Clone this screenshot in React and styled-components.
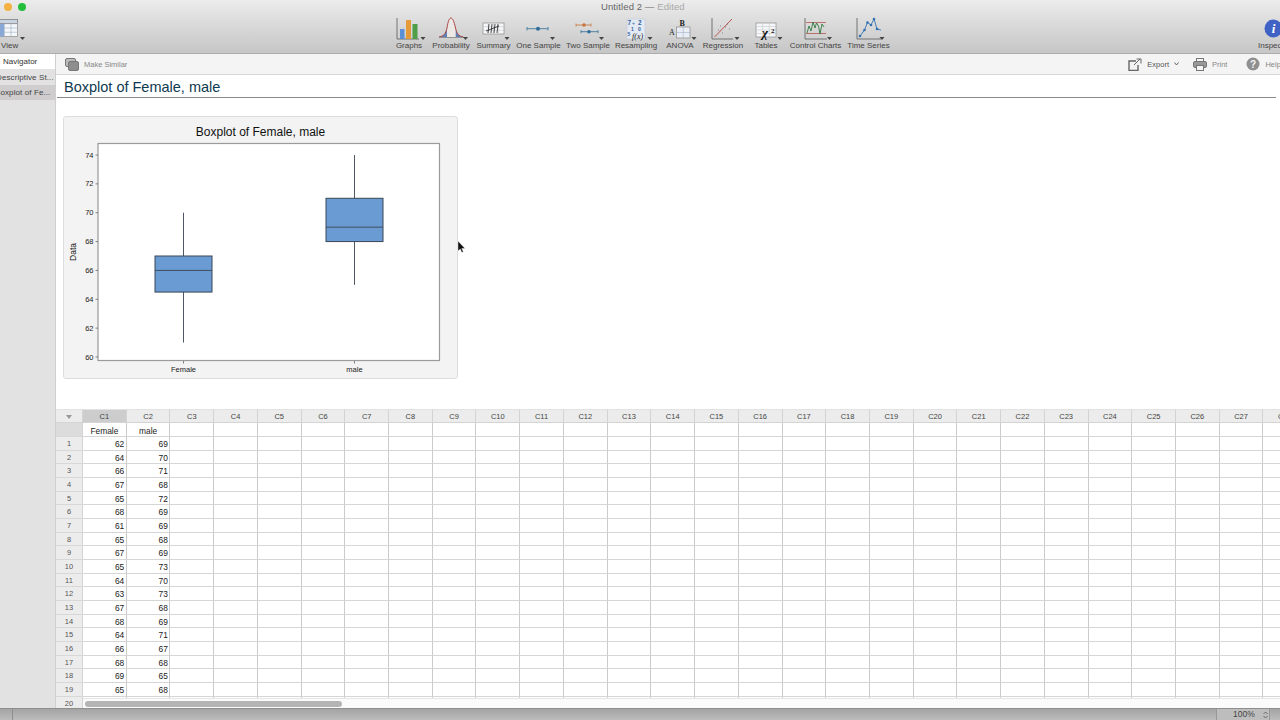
import React from "react";
import styled, { createGlobalStyle } from "styled-components";

const GlobalStyle = createGlobalStyle`
	html, body {
		margin: 0;
		padding: 0;
		width: 100%;
		height: 100%;
		overflow: hidden;
		background: #fff;
		font-family: "Liberation Sans", Arial, sans-serif;
	}
`;

const Page = styled.div`
	position: relative;
	width: 1280px;
	height: 720px;
	display: flex;
	flex-direction: column;
	overflow: hidden;
`;

const TopBar = styled.header`
	height: 54px;
	flex: none;
	box-sizing: border-box;
	border-bottom: 1px solid #aeaeae;
	background: linear-gradient(#ececec, #e0e0e0 30%, #c6c6c6);
	display: flex;
	flex-direction: column;
`;

const TitleRow = styled.div`
	height: 14px;
	flex: none;
	display: flex;
	align-items: center;
	padding-left: 4px;
	position: relative;
`;

const Light = styled.span`
	width: 8px;
	height: 8px;
	border-radius: 50%;
	margin-right: 6px;
	background: ${(props) => props.$color};
`;

const WindowTitle = styled.div`
	position: absolute;
	left: 601px;
	top: 1px;
	font-size: 9.5px;
	line-height: 12px;
	letter-spacing: 0.1px;
	color: #666;

	span {
		color: #aaa;
	}
`;

const ToolRow = styled.div`
	height: 36px;
	flex: none;
	margin-top: 2px;
	display: flex;
`;

const ViewSlot = styled.div`
	width: 388px;
	flex: none;
`;

const Tool = styled.div`
	width: ${(props) => props.$w}px;
	flex: none;
	display: flex;
	flex-direction: column;
	align-items: center;

	svg {
		display: block;
		flex: none;
	}
`;

const ToolLabel = styled.div`
	font-size: 8px;
	line-height: 9px;
	padding-left: ${(props) => props.$indent || 0}px;
	color: #444;
	white-space: nowrap;
`;

const Inspector = styled.div`
	position: absolute;
	left: 1258px;
	top: 16px;
	width: 40px;

	svg {
		display: block;
	}
`;

const ViewTool = styled.div`
	position: absolute;
	left: 0;
	top: 16px;
	width: 28px;

	svg {
		display: block;
	}
`;

const Body = styled.div`
	flex: 1;
	display: flex;
	min-height: 0;
`;

const Nav = styled.nav`
	width: 56px;
	flex: none;
	box-sizing: border-box;
	background: #e2e2e2;
	border-right: 1px solid #cfcfcf;
	overflow: hidden;
`;

const NavTab = styled.div`
	height: 15px;
	background: #fff;
	font-size: 8px;
	line-height: 15px;
	padding-left: 3px;
	color: #333;
`;

const NavList = styled.div`
	padding-top: 1px;
`;

const NavItem = styled.div`
	height: 15px;
	line-height: 15px;
	font-size: 8px;
	letter-spacing: 0.1px;
	color: #444;
	white-space: nowrap;
	text-indent: ${(props) => props.$indent}px;
	background: ${(props) => (props.$active ? "#cfcdcd" : "transparent")};
`;

const Main = styled.main`
	flex: 1;
	min-width: 0;
	display: flex;
	flex-direction: column;
`;

const SubBar = styled.div`
	height: 21px;
	flex: none;
	box-sizing: border-box;
	background: #f4f4f4;
	border-bottom: 1px solid #d6d6d6;
	display: flex;
	align-items: center;
	padding-left: 9px;
`;

const SubButton = styled.div`
	display: flex;
	align-items: center;
	gap: 5px;
	margin-left: ${(props) => props.$left || 0}px;
	font-size: 7.5px;
	color: ${(props) => (props.$dark ? "#555" : "#888")};
	white-space: nowrap;
`;

const ReportArea = styled.section`
	flex: 1;
	min-height: 0;
	padding: 0 4px 0 1px;
`;

const ReportTitle = styled.h1`
	margin: 0 0 18px;
	height: 23px;
	box-sizing: border-box;
	border-bottom: 1px solid #8a8a8a;
	padding-left: 7px;
	font-size: 14.5px;
	font-weight: normal;
	line-height: 24px;
	color: #0f3a50;
`;

const GraphCard = styled.figure`
	margin: 0 0 0 6px;
	width: 395px;
	height: 263px;
	box-sizing: border-box;
	background: #f3f3f3;
	border: 1px solid #dcdcdc;
	border-radius: 3px;
	display: flex;
	flex-direction: column;
`;

const GraphTitle = styled.figcaption`
	height: 24px;
	flex: none;
	text-align: center;
	font-size: 12px;
	line-height: 31px;
	color: #111;
`;

const Sheet = styled.section`
	position: relative;
	height: 299px;
	flex: none;
	overflow: hidden;
	display: grid;
	grid-template-columns: 27px repeat(28, 43.73px);
	grid-template-rows: 14px 14px;
	grid-auto-rows: 13.68px;
	width: 1224px;
`;

const HeadCell = styled.div`
	box-sizing: border-box;
	background: ${(props) => (props.$active ? "#cdcdcd" : "#ececec")};
	border-right: 1px solid #d4d4d4;
	border-top: 1px solid #e2e2e2;
	border-bottom: 1px solid #d4d4d4;
	font-size: 7.5px;
	line-height: 13px;
	text-align: center;
	color: #444;
`;

const RowHead = styled.div`
	box-sizing: border-box;
	background: ${(props) => (props.$corner ? "#dcdcdc" : "#ececec")};
	border-right: 1px solid #d4d4d4;
	border-bottom: 1px solid #d8d8d8;
	font-size: 7.5px;
	line-height: 13px;
	text-align: center;
	color: #555;
`;

const Cell = styled.div`
	box-sizing: border-box;
	border-right: 1px solid #cbcbcb;
	border-bottom: 1px solid #d6d6d6;
	padding-right: ${(props) => (props.$label ? 0 : 1.5)}px;
	font-size: 8.4px;
	line-height: ${(props) => (props.$label ? 16 : 15)}px;
	text-align: ${(props) => (props.$label ? "center" : "right")};
	color: #1a1a1a;
	white-space: nowrap;
`;

const ScrollTrack = styled.div`
	position: absolute;
	left: 27px;
	right: 0;
	bottom: 0;
	height: 10px;
	background: #fbfbfb;
	border-top: 1px solid #e6e6e6;
	box-sizing: border-box;
`;

const ScrollThumb = styled.div`
	position: absolute;
	left: 2px;
	top: 2px;
	width: 257px;
	height: 5.5px;
	border-radius: 3px;
	background: #b4b4b4;
`;

const StatusBar = styled.footer`
	height: 12px;
	flex: none;
	box-sizing: border-box;
	border-top: 1px solid #8f8f8f;
	background: linear-gradient(#a4a4a4, #bcbcbc);
	display: flex;
`;

const StatusStub = styled.div`
	width: 13px;
	flex: none;
	box-sizing: border-box;
	border-right: 1px solid #8f8f8f;
`;

const ZoomBox = styled.div`
	width: 54px;
	margin-left: 1203px;
	flex: none;
	box-sizing: border-box;
	border-left: 1px solid #999;
	border-right: 1px solid #999;
	background: #bdbdbd;
	font-size: 8.5px;
	line-height: 11px;
	color: #444;
	padding-left: 16px;
	display: flex;
	gap: 8px;
	align-items: center;
`;

const Cursor = styled.svg`
	position: absolute;
	left: 457px;
	top: 240px;
`;

const SANS = "Liberation Sans";
const SERIF = "Liberation Serif";

const Drop = ({ x, y }) => <path d={`M${x - 2.5} ${y}h5l-2.5 3z`} fill="#444" />;

const MiniGrid = ({ x, y, w, h, cols, rows, line = "#9fb0c4", fill = "#f6f7fa" }) => (
	<g>
		<rect x={x} y={y} width={w} height={h} fill={fill} stroke="#8b8b8b" strokeWidth="0.7" />
		{Array.from({ length: cols - 1 }, (_, i) => (
			<line key={i} x1={x + ((i + 1) * w) / cols} x2={x + ((i + 1) * w) / cols} y1={y} y2={y + h} stroke={line} strokeWidth="0.6" />
		))}
		{Array.from({ length: rows - 1 }, (_, i) => (
			<line key={i} y1={y + ((i + 1) * h) / rows} y2={y + ((i + 1) * h) / rows} x1={x} x2={x + w} stroke={line} strokeWidth="0.6" />
		))}
	</g>
);

const Axes = ({ x, top, bottom, right }) => (
	<path d={`M${x} ${top}V${bottom}H${right}`} fill="none" stroke="#666" strokeWidth="0.9" />
);

// icons are drawn in page coordinates, each tool's viewBox crops its own slot
const tools = [
	{
		label: "Graphs", x: 388, w: 42,
		icon: (
			<>
				<Axes x={397} top={18} bottom={39} right={419} />
				<rect x="400" y="29" width="4.5" height="10" fill="#5b8fd6" />
				<rect x="406" y="20" width="5" height="19" fill="#e59b3a" />
				<rect x="412.5" y="24" width="5" height="15" fill="#4f9e48" />
				<Drop x={423} y={37} />
			</>
		),
	},
	{
		label: "Probability", x: 430, w: 42,
		icon: (
			<>
				<path d="M440 37C444 36 445.5 34 447 29V37Z" fill="#5d7fb8" />
				<path d="M455.5 29C457 34 458.5 36 462.5 37H455.5Z" fill="#5d7fb8" />
				<path d="M447 29C448 21 449.5 18 451 18S454 21 455.5 29V37H447Z" fill="#ece8e6" />
				<path d="M439 37C444 36 445.5 34 447 28C448 21 449.5 18 451 18S454 21 455.5 28C457 34 458.5 36 463.5 37" fill="none" stroke="#a33535" strokeWidth="0.9" />
				<line x1="439" x2="463.5" y1="37.5" y2="37.5" stroke="#777" strokeWidth="0.7" />
				<Drop x={465.5} y={37} />
			</>
		),
	},
	{
		label: "Summary", x: 472, w: 43,
		icon: (
			<>
				<MiniGrid x={483} y={23} w={21} h={11} cols={4} rows={3} line="#c9c9c9" />
				<path d="M488 33l1-9M491 33l1-9M494 33l1-9M497 33l1-9M486 31l13-5" stroke="#222" strokeWidth="0.8" fill="none" />
				<Drop x={507} y={37} />
			</>
		),
	},
	{
		label: "One Sample", x: 515, w: 47,
		icon: (
			<>
				<path d="M527 28.7H548M527 27v3.4M548 27v3.4" stroke="#2f6d9b" strokeWidth="0.8" />
				<circle cx="538" cy="28.7" r="2" fill="#2f6d9b" />
				<Drop x={552.5} y={37} />
			</>
		),
	},
	{
		label: "Two Sample", x: 562, w: 52,
		icon: (
			<>
				<path d="M576 25H591M576 23.5v3M591 23.5v3" stroke="#c9733a" strokeWidth="0.8" />
				<circle cx="584" cy="25" r="1.8" fill="#c9733a" />
				<path d="M581 31.7H598M581 30.2v3M598 30.2v3" stroke="#2f6d9b" strokeWidth="0.8" />
				<circle cx="589" cy="31.7" r="1.8" fill="#2f6d9b" />
				<Drop x={601.5} y={37} />
			</>
		),
	},
	{
		label: "Resampling", x: 614, w: 44,
		icon: (
			<>
				<rect x="627" y="19" width="18" height="20" fill="#e4eaf3" stroke="#b9c3d2" strokeWidth="0.5" />
				<text x="627.5" y="25" fontSize="6.5" fontWeight="bold" fill="#2e5f9b" fontFamily={SANS}>7</text>
				<text x="632" y="25" fontSize="5" fill="#2e5f9b" fontFamily={SANS}>+</text>
				<text x="638" y="25" fontSize="6.5" fontWeight="bold" fill="#2e5f9b" fontFamily={SANS}>2</text>
				<text x="631" y="31" fontSize="5" fontWeight="bold" fill="#2e5f9b" fontFamily={SANS}>1</text>
				<text x="638" y="31" fontSize="5" fontWeight="bold" fill="#2e5f9b" fontFamily={SANS}>0</text>
				<text x="627.5" y="36" fontSize="5" fontWeight="bold" fill="#2e5f9b" fontFamily={SANS}>5</text>
				<text x="632" y="38.5" fontSize="8" fontStyle="italic" fill="#222" fontFamily={SERIF}>f(x)</text>
				<Drop x={650} y={37} />
			</>
		),
	},
	{
		label: "ANOVA", x: 658, w: 44,
		icon: (
			<>
				<text x="669" y="35" fontSize="8" fill="#222" fontFamily={SERIF}>A</text>
				<text x="679.5" y="26" fontSize="8" fontWeight="bold" fill="#222" fontFamily={SERIF}>B</text>
				<MiniGrid x={676.5} y={27} w={13.5} h={11} cols={2} rows={2} fill="#e9eef6" />
				<Drop x={694} y={37} />
			</>
		),
	},
	{
		label: "Regression", x: 702, w: 42,
		icon: (
			<>
				<Axes x={712} top={18} bottom={39} right={733} />
				<line x1="714.5" y1="37" x2="732" y2="19" stroke="#b5453f" strokeWidth="0.9" />
				<path d="M718 30h.8M722 33h.8M725 27h.8M727 24h.8M720 26h.8M729 29h.8" stroke="#555" strokeWidth="0.8" />
				<Drop x={737} y={37} />
			</>
		),
	},
	{
		label: "Tables", x: 744, w: 44,
		icon: (
			<>
				<MiniGrid x={756} y={23} w={20} h={14} cols={3} rows={4} line="#c7c7c7" />
				<text x="762" y="37" fontSize="13" fontStyle="italic" fontWeight="bold" fill="#111" fontFamily={SERIF}>χ</text>
				<text x="771" y="33" fontSize="7" fontWeight="bold" fill="#111" fontFamily={SERIF}>2</text>
				<Drop x={780} y={37} />
			</>
		),
	},
	{
		label: "Control Charts", x: 788, w: 55,
		icon: (
			<>
				<Axes x={805} top={18} bottom={39} right={827} />
				<path d="M806 22.5H826M806 33.5H826" stroke="#b5564f" strokeWidth="0.8" />
				<path d="M807 33l2-7 2 5 2-9 2 6 1.5-5 2 3 1.5 8 2-10 2 3" fill="none" stroke="#2f7a3d" strokeWidth="0.9" />
				<Drop x={829.5} y={37} />
			</>
		),
	},
	{
		label: "Time Series", x: 843, w: 51,
		icon: (
			<>
				<Axes x={857} top={18} bottom={39} right={881} />
				<path d="M860 36L864.5 30L867.5 22.5L871 25L874 19L877 29L881 30" fill="none" stroke="#2f6fb3" strokeWidth="0.9" />
				{[[860, 36], [864.5, 30], [867.5, 22.5], [871, 25], [874, 19], [877, 29]].map(([cx, cy]) => (
					<circle key={cx} cx={cx} cy={cy} r="1.3" fill="#2f6fb3" />
				))}
				<Drop x={882} y={37} />
			</>
		),
	},
];

const female = [62, 64, 66, 67, 65, 68, 61, 65, 67, 65, 64, 63, 67, 68, 64, 66, 68, 69, 65];
const male = [69, 70, 71, 68, 72, 69, 69, 68, 69, 73, 70, 73, 68, 69, 71, 67, 68, 65, 68];
const columnCount = 28;

const yFor = (value) => 155 + ((74 - value) * 202) / 14;

const BoxPlot = ({ x, low, q1, median, q3, high }) => {
	const left = x - 28.5;
	const width = 57;
	return (
		<g stroke="#3b4654">
			<line x1={x} x2={x} y1={yFor(high)} y2={yFor(low)} strokeWidth="0.9" />
			<rect x={left} y={yFor(q3)} width={width} height={yFor(q1) - yFor(q3)} fill="#6a9bd3" strokeWidth="1" />
			<line x1={left} x2={left + width} y1={yFor(median)} y2={yFor(median)} strokeWidth="0.9" />
		</g>
	);
};

const Chart = () => (
	<svg width="393" height="237" viewBox="64 141 393 237">
		<rect x="98" y="143.5" width="341.5" height="217" fill="#fff" stroke="#9a9a9a" strokeWidth="1.2" />
		{[60, 62, 64, 66, 68, 70, 72, 74].map((tick) => (
			<g key={tick}>
				<line x1="95.5" x2="98" y1={yFor(tick)} y2={yFor(tick)} stroke="#555" strokeWidth="0.7" />
				<text x="93.5" y={yFor(tick) + 2.5} fontSize="7.5" textAnchor="end" fill="#222" fontFamily={SANS}>{tick}</text>
			</g>
		))}
		<text transform="translate(76 252) rotate(-90)" fontSize="8.5" textAnchor="middle" fill="#222" fontFamily={SANS}>Data</text>
		<BoxPlot x={183.5} low={61} q1={64.5} median={66} q3={67} high={70} />
		<BoxPlot x={354.5} low={65} q1={68} median={69} q3={71} high={74} />
		<path d="M183.5 361v2.5M354.5 361v2.5" stroke="#555" strokeWidth="0.7" />
		<text x="183.5" y="372" fontSize="7.5" textAnchor="middle" fill="#222" fontFamily={SANS}>Female</text>
		<text x="354.5" y="372" fontSize="7.5" textAnchor="middle" fill="#222" fontFamily={SANS}>male</text>
	</svg>
);

const Worksheet = () => {
	const columns = Array.from({ length: columnCount }, (_, i) => i);
	return (
		<Sheet>
			<HeadCell>
				<svg width="6" height="4" viewBox="0 0 6 4">
					<path d="M0 0h6L3 4z" fill="#999" />
				</svg>
			</HeadCell>
			{columns.map((i) => (
				<HeadCell key={i} $active={i === 0}>C{i + 1}</HeadCell>
			))}
			<RowHead $corner />
			{columns.map((i) => (
				<Cell key={i} $label>{i === 0 ? "Female" : i === 1 ? "male" : ""}</Cell>
			))}
			{Array.from({ length: 20 }, (_, row) => (
				<React.Fragment key={row}>
					<RowHead>{row + 1}</RowHead>
					{columns.map((i) => (
						<Cell key={i}>{i === 0 ? female[row] : i === 1 ? male[row] : ""}</Cell>
					))}
				</React.Fragment>
			))}
			<ScrollTrack>
				<ScrollThumb />
			</ScrollTrack>
		</Sheet>
	);
};

const App = () => (
	<Page>
		<GlobalStyle />
		<TopBar>
			<TitleRow>
				<Light $color="#f4b240" />
				<Light $color="#23bf3c" />
				<WindowTitle>Untitled 2 — <span>Edited</span></WindowTitle>
			</TitleRow>
			<ToolRow>
				<ViewSlot />
				{tools.map((tool) => (
					<Tool key={tool.label} $w={tool.w}>
						<svg width={tool.w} height="25" viewBox={`${tool.x} 16 ${tool.w} 25`}>{tool.icon}</svg>
						<ToolLabel>{tool.label}</ToolLabel>
					</Tool>
				))}
			</ToolRow>
			<ViewTool>
				<svg width="28" height="25" viewBox="0 16 28 25">
					<MiniGrid x={-2} y={19.5} w={19.5} h={17} cols={3} rows={4} />
					<rect x="-2" y="23.5" width="6" height="13" fill="#8aa8d6" />
					<rect x="-2" y="19.5" width="19.5" height="4" fill="#c9d3e2" stroke="#777" strokeWidth="0.6" />
					<Drop x={22.5} y={37} />
				</svg>
				<ToolLabel $indent={1}>View</ToolLabel>
			</ViewTool>
			<Inspector>
				<svg width="32" height="25" viewBox="1258 16 32 25">
					<circle cx="1273.5" cy="28.5" r="9" fill="#3f62c4" />
					<text x="1273.5" y="33" fontSize="13" fontWeight="bold" fontStyle="italic" textAnchor="middle" fill="#fff" fontFamily={SERIF}>i</text>
				</svg>
				<ToolLabel>Inspector</ToolLabel>
			</Inspector>
		</TopBar>
		<Body>
			<Nav>
				<NavTab>Navigator</NavTab>
				<NavList>
					<NavItem $indent={-4}>Descriptive St...</NavItem>
					<NavItem $active $indent={-5}>Boxplot of Fe...</NavItem>
				</NavList>
			</Nav>
			<Main>
				<SubBar>
					<SubButton>
						<svg width="14" height="13" viewBox="0 0 14 13">
							<rect x=".5" y=".5" width="10" height="8" rx="1.5" fill="#bbb" stroke="#777" />
							<rect x="3.5" y="3.5" width="10" height="9" rx="1.5" fill="#8e8e8e" stroke="#777" />
						</svg>
						<span>Make Similar</span>
					</SubButton>
					<SubButton $dark $left={1001}>
						<svg width="14" height="13" viewBox="0 0 14 13">
							<path d="M8 3H1v9.5h9V7" fill="none" stroke="#666" strokeWidth="1.4" />
							<path d="M6 7l6-6M8.5 1H13v4.5" fill="none" stroke="#666" strokeWidth="1" />
						</svg>
						<span>Export</span>
						<svg width="5" height="4" viewBox="0 0 5 4">
							<path d="M.5 .5L2.5 3 4.5 .5" fill="none" stroke="#555" strokeWidth=".9" />
						</svg>
					</SubButton>
					<SubButton $left={14}>
						<svg width="14" height="13" viewBox="0 0 14 13">
							<rect x="3.5" y=".5" width="7" height="4" fill="none" stroke="#777" />
							<rect x=".5" y="3.5" width="13" height="6" rx="1.5" fill="#999" stroke="#777" />
							<rect x="3.5" y="7.5" width="7" height="5" fill="#f4f4f4" stroke="#777" />
						</svg>
						<span>Print</span>
					</SubButton>
					<SubButton $left={19}>
						<svg width="14" height="14" viewBox="0 0 14 14">
							<circle cx="7" cy="7" r="6.5" fill="#8f8f8f" />
							<text x="7" y="10.5" fontSize="10" fontWeight="bold" textAnchor="middle" fill="#f4f4f4" fontFamily={SANS}>?</text>
						</svg>
						<span>Help</span>
					</SubButton>
				</SubBar>
				<ReportArea>
					<ReportTitle>Boxplot of Female, male</ReportTitle>
					<GraphCard>
						<GraphTitle>Boxplot of Female, male</GraphTitle>
						<Chart />
					</GraphCard>
				</ReportArea>
				<Worksheet />
			</Main>
		</Body>
		<StatusBar>
			<StatusStub />
			<ZoomBox>
				<span>100%</span>
				<svg width="5" height="8" viewBox="0 0 5 8">
					<path d="M.5 3L2.5 1 4.5 3M.5 5L2.5 7 4.5 5" fill="none" stroke="#555" strokeWidth=".8" />
				</svg>
			</ZoomBox>
		</StatusBar>
		<Cursor width="8" height="14" viewBox="0 0 8 14">
			<path d="M1 1v10l2.3-2 1.5 3.5 1.5-.7L4.8 8.5H8z" fill="#111" stroke="#fff" strokeWidth=".4" />
		</Cursor>
	</Page>
);

export default App;
